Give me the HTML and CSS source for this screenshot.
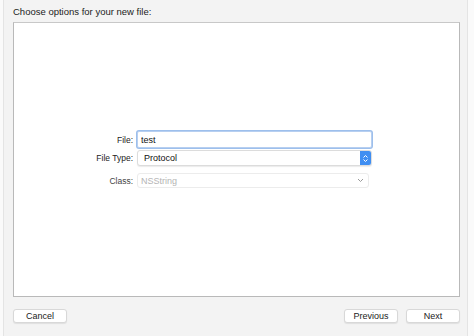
FILE: index.html
```html
<!DOCTYPE html>
<html lang="en">
<head>
    <meta charset="UTF-8">
    <title>Choose options</title>
    <link rel="stylesheet" href="styles.css">
</head>
<body>
    <div class="window">
        <p class="title">Choose options for your new file:</p>

        <!-- Options panel -->
        <div class="panel">
            <div class="form">
                <div class="row">
                    <label for="file">File:</label>
                    <input type="text" id="file" class="field focused" value="test">
                </div>
                <div class="row">
                    <label>File Type:</label>
                    <div class="select">
                        <span>Protocol</span>
                        <span class="stepper">
                            <svg width="7" height="9" viewBox="0 0 7 9">
                                <path d="M1.5 3.5 L3.5 1.5 L5.5 3.5 M1.5 5.5 L3.5 7.5 L5.5 5.5" fill="none" stroke="#fff" stroke-width="1"/>
                            </svg>
                        </span>
                    </div>
                </div>
                <div class="row">
                    <label class="dim">Class:</label>
                    <div class="select disabled">
                        <span>NSString</span>
                        <svg class="chevron" width="7" height="5" viewBox="0 0 7 5">
                            <path d="M1 1 L3.5 3.5 L6 1" fill="none" stroke="#9a9a9a" stroke-width="1"/>
                        </svg>
                    </div>
                </div>
            </div>
        </div>

        <!-- Buttons -->
        <div class="buttons">
            <button class="btn">Cancel</button>
            <div class="right">
                <button class="btn">Previous</button>
                <button class="btn">Next</button>
            </div>
        </div>
    </div>
</body>
</html>
```

FILE: styles.css
```css
body {
    margin: 0;
    background: #fafafa;
    font-family: 'Liberation Sans', Arial, sans-serif;
}

.window {
    margin: 0 6px 0 3px;
    height: 336px;
    background: #f3f3f3;
    border-left: 1px solid #e4e4e4;
    border-right: 1px solid #e4e4e4;
    padding: 0 7px 0 9px;
    box-sizing: border-box;
    display: flex;
    flex-direction: column;
}

.title {
    margin: 0;
    padding-top: 6px;
    height: 22px;
    flex-shrink: 0;
    box-sizing: border-box;
    font-size: 9.5px;
    color: #222;
}

/* White options panel */
.panel {
    height: 275px;
    flex-shrink: 0;
    background: #fff;
    border: 1px solid #b9b9b9;
    border-top-color: #c8c8c8;
    box-sizing: border-box;
    display: flex;
    align-items: center;
}

.form {
    width: 100%;
    margin-top: 2px;
}

.row {
    display: flex;
    align-items: center;
    margin-bottom: 2px;
}

.row:nth-child(2) {
    margin-bottom: 7px;
}

label {
    width: 119px;
    text-align: right;
    padding-right: 4px;
    font-size: 8.5px;
    color: #222;
}

label.dim {
    color: #444;
}

.field {
    width: 235px;
    height: 17px;
    box-sizing: border-box;
    border: 1px solid #b7cff0;
    box-shadow: 0 0 0 1px #9dbfec;
    border-radius: 2px;
    padding: 0 3px;
    font-family: inherit;
    font-size: 9px;
    color: #111;
    outline: none;
}

.select {
    width: 235px;
    height: 16px;
    box-sizing: border-box;
    border: 1px solid #dcdcdc;
    border-radius: 3px;
    background: #fff;
    box-shadow: 0 1px 1px rgba(0, 0, 0, 0.08);
    display: flex;
    align-items: center;
    justify-content: space-between;
    padding-left: 6px;
    font-size: 9px;
    color: #111;
}

.stepper {
    width: 11px;
    height: 14px;
    background: #3f8ef2;
    border-radius: 0 2px 2px 0;
    display: flex;
    align-items: center;
    justify-content: center;
}

.select.disabled {
    width: 232px;
    height: 15px;
    border-color: #ececec;
    box-shadow: none;
    color: #b4b4b4;
    padding: 0 4px 0 3px;
}

/* Bottom buttons */
.buttons {
    display: flex;
    justify-content: space-between;
    margin-top: 12px;
}

.right {
    display: flex;
    gap: 8px;
}

.btn {
    width: 54px;
    height: 14px;
    padding: 0;
    background: #fff;
    border: 1px solid #d8d8d8;
    border-radius: 3px;
    box-shadow: 0 1px 1px rgba(0, 0, 0, 0.08);
    font-family: inherit;
    font-size: 9px;
    color: #222;
}
```
